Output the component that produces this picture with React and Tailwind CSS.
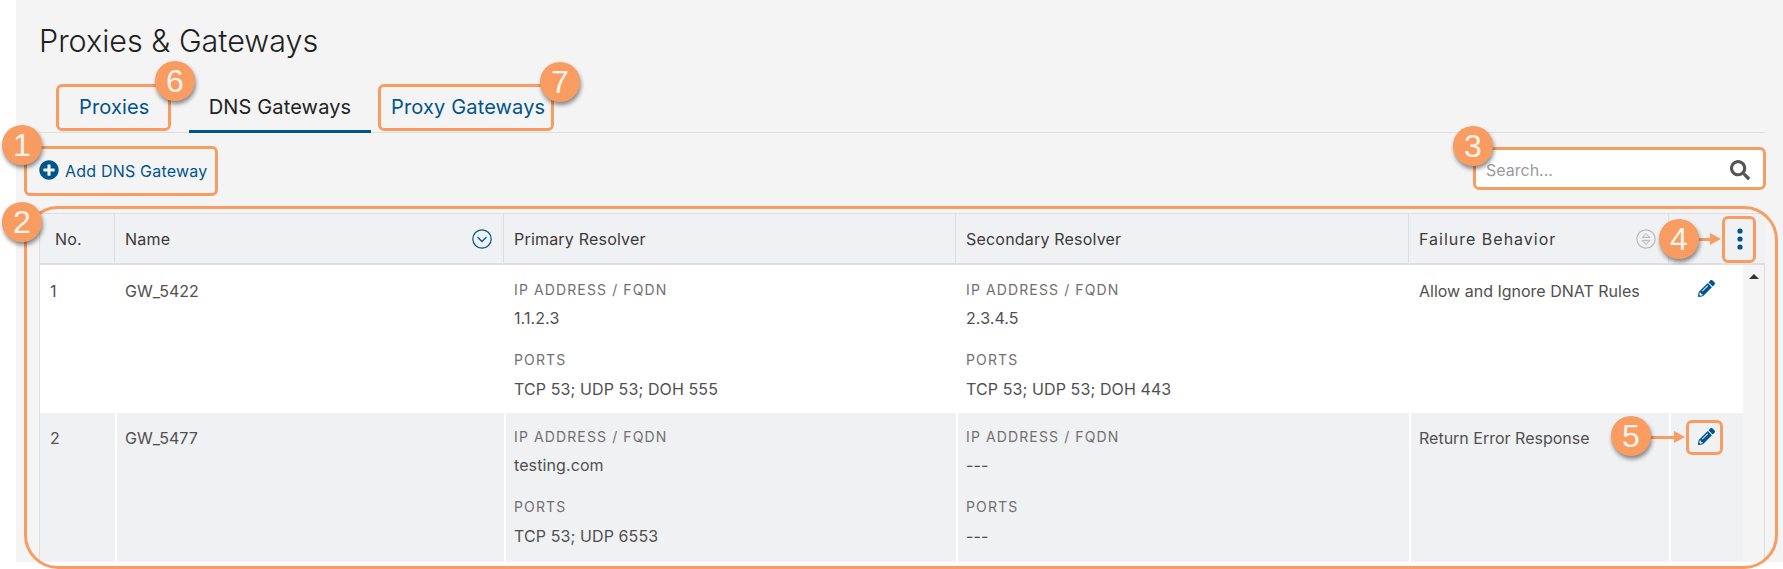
import React from 'react';
import { FaPencilAlt, FaPlusCircle, FaSearch } from 'react-icons/fa';

const rows = [
  {
    no: '1',
    name: 'GW_5422',
    primary: { ip: '1.1.2.3', ports: 'TCP 53; UDP 53; DOH 555' },
    secondary: { ip: '2.3.4.5', ports: 'TCP 53; UDP 53; DOH 443' },
    failure: 'Allow and Ignore DNAT Rules',
    striped: false
  },
  {
    no: '2',
    name: 'GW_5477',
    primary: { ip: 'testing.com', ports: 'TCP 53; UDP 6553' },
    secondary: { ip: '---', ports: '---' },
    failure: 'Return Error Response',
    striped: true
  }
];

const Resolver = ({ data, cellClass }) => (
  <div className={cellClass}>
    <div className="h-5 text-[14px] leading-5 tracking-[0.08em] text-[#707070]">IP ADDRESS / FQDN</div>
    <div className="mt-[8px] h-5 text-[16px] leading-5 tracking-[0.1px] text-[#505050]">{data.ip}</div>
    <div className="mt-[22px] h-5 text-[14px] leading-5 tracking-[0.08em] text-[#707070]">PORTS</div>
    <div className="mt-[9px] h-5 text-[16px] leading-5 tracking-[0.1px] text-[#505050]">{data.ports}</div>
  </div>
);

const Row = ({ row }) => {
  // the striped row shows white column rules, the plain one has none
  const cellClass = row.striped ? 'border-l-2 border-white pl-[8px] pt-[14px]' : 'pl-[10px] pt-[15px]';
  const textClass = row.striped ? 'pt-[15px]' : 'pt-[16px]';
  return (
    <div className={`grid h-[148px] grid-cols-[75px_389px_452px_453px_260px_74px] ${row.striped ? 'bg-[#f0f1f3]' : 'bg-white'}`}>
      <div className={`pl-[10px] text-[16px] leading-5 text-[#505050] ${textClass}`}>{row.no}</div>
      <div className={`text-[16px] leading-5 text-[#505050] ${cellClass} ${textClass}`}>{row.name}</div>
      <Resolver data={row.primary} cellClass={cellClass} />
      <Resolver data={row.secondary} cellClass={cellClass} />
      <div className={`text-[16px] leading-5 text-[#505050] ${cellClass} ${textClass}`}>{row.failure}</div>
      <div className={`pt-[15px] ${row.striped ? 'border-l-2 border-white pl-[27px]' : 'pl-[29px]'}`}>
        <FaPencilAlt className="h-[17px] w-[17px] text-[#00558c]" />
      </div>
    </div>
  );
};

const Callout = ({ n, className }) => (
  <div className={`absolute flex h-10 w-10 items-center justify-center rounded-full bg-[#f89c62] font-['Liberation_Sans',sans-serif] text-[32px] text-[#fdf3ea] shadow-[1px_3px_4px_rgba(0,0,0,0.45)] ${className}`}>
    {n}
  </div>
);

const Outline = ({ className }) => (
  <div className={`absolute rounded-md border-[3px] border-[#f89c62] ${className}`} />
);

const Arrow = ({ className }) => (
  <div className={`absolute flex items-center ${className}`}>
    <div className="h-[3px] flex-1 bg-[#f89c62]" />
    <div className="h-0 w-0 border-y-[6px] border-l-[11px] border-y-transparent border-l-[#f89c62]" />
  </div>
);

const HeaderCell = ({ children, className = '' }) => (
  <div className={`flex items-center border-r border-[#dcdee1] pt-[1px] text-[16px] tracking-[0.2px] text-[#3a3a3a] ${className}`}>{children}</div>
);

const App = () => {
  return (
    <div className="relative h-[569px] w-full overflow-hidden bg-white pl-4 font-['Inter',sans-serif]">
      <div className="h-[562px] bg-[#f4f4f4] pl-[23px] pr-[18px]">
        <h1 className="h-[84px] pt-[20px] text-[30.5px] font-light leading-[42px] text-[#1f1f1f]">Proxies &amp; Gateways</h1>

        {/* tabs */}
        <div className="flex h-[49px] border-b border-[#dedede] pl-[17px] text-[20px] tracking-[0.15px]">
          <div className="flex h-[49px] w-[133px] items-center justify-start pb-[3px] pl-[23px] text-[#00558c]">Proxies</div>
          <div className="flex h-[49px] w-[182px] items-center justify-center border-b-[3px] border-[#00558c] text-[#222]">DNS Gateways</div>
          <div className="flex h-[49px] items-center pb-[3px] pl-[20px] text-[#00558c]">Proxy Gateways</div>
        </div>

        {/* toolbar */}
        <div className="flex h-[80px] items-start justify-between">
          <button className="mt-[28px] flex items-center gap-[6px] text-[16px] leading-5 tracking-[0.2px] text-[#00558c]">
            <FaPlusCircle className="-mt-[2px] h-5 w-5" />
            Add DNS Gateway
          </button>
          <div className="mt-[17px] flex h-[40px] w-[292px] items-center justify-between bg-white pl-[13px] pr-[15px]">
            <span className="text-[16px] text-[#9a9a9a]">Search...</span>
            <FaSearch className="h-5 w-5 text-[#555]" />
          </div>
        </div>

        {/* table */}
        <div className="w-[1726px] border-l border-[#dcdee1]">
          <div className="grid h-[52px] grid-cols-[75px_389px_452px_453px_260px_96px] border-b-2 border-t border-[#dcdee1] bg-[#f0f1f3]">
            <HeaderCell className="pl-[15px]">No.</HeaderCell>
            <HeaderCell className="justify-between pl-[10px] pr-[11px]">
              Name
              <svg width="20" height="20" viewBox="0 0 20 20" fill="none" stroke="#00558c" strokeWidth="1.2">
                <circle cx="10" cy="10" r="9.2" />
                <path d="M5.5 8l4.5 4.5L14.5 8" strokeWidth="1.3" />
              </svg>
            </HeaderCell>
            <HeaderCell className="pl-[10px]">Primary Resolver</HeaderCell>
            <HeaderCell className="pl-[10px]">Secondary Resolver</HeaderCell>
            <HeaderCell className="justify-between pl-[10px] pr-[12px] tracking-[1px]">
              Failure Behavior
              <svg width="20" height="20" viewBox="0 0 20 20" fill="none" stroke="#b8babd" strokeWidth="1.2">
                <circle cx="10" cy="10" r="9.2" />
                <path d="M6 8.6L10 4.4l4 4.2zM6 11.4l4 4.2 4-4.2z" strokeWidth="1" fill="#e4e5e7" />
              </svg>
            </HeaderCell>
            <div className="flex items-center justify-end pr-[21px]">
              <svg width="8" height="22" viewBox="0 0 8 22" fill="#00558c">
                <circle cx="4" cy="3" r="2.6" />
                <circle cx="4" cy="11" r="2.6" />
                <circle cx="4" cy="19" r="2.6" />
              </svg>
            </div>
          </div>
          <div className="flex">
            <div className="w-[1703px] shrink-0">
              {rows.map((row) => (
                <Row key={row.no} row={row} />
              ))}
            </div>
            <div className="flex w-[22px] justify-center border-r border-[#dcdee1] pt-[9px]">
              <div className="h-0 w-0 border-x-[5px] border-b-[5px] border-x-transparent border-b-[#333]" />
            </div>
          </div>
        </div>
      </div>

      {/* annotations */}
      <Outline className="left-[56px] top-[84px] h-[47px] w-[115px]" />
      <Outline className="left-[378px] top-[84px] h-[47px] w-[176px]" />
      <Outline className="left-[24px] top-[146px] h-[50px] w-[194px]" />
      <Outline className="left-[1473px] top-[147px] h-[43px] w-[293px]" />
      <Outline className="left-[1722px] top-[216px] h-[47px] w-[34px]" />
      <Outline className="left-[1686px] top-[420px] h-[35px] w-[37px]" />
      <div className="absolute left-[24px] top-[206px] h-[363px] w-[1754px] rounded-[34px] border-[3px] border-[#f89c62]" />
      <Arrow className="left-[1698px] top-[233px] h-3 w-[23px]" />
      <Arrow className="left-[1650px] top-[431px] h-3 w-[35px]" />
      <Callout n="1" className="left-[2px] top-[125px]" />
      <Callout n="2" className="left-[2px] top-[202px]" />
      <Callout n="3" className="left-[1453px] top-[126px]" />
      <Callout n="4" className="left-[1659px] top-[219px]" />
      <Callout n="5" className="left-[1611px] top-[416px]" />
      <Callout n="6" className="left-[155px] top-[61px]" />
      <Callout n="7" className="left-[540px] top-[62px]" />
    </div>
  );
};

export default App;
